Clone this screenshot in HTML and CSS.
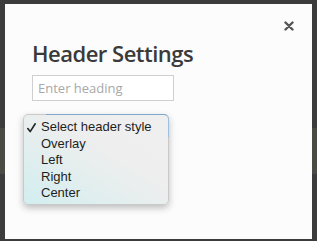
FILE: index.html
```html
<!DOCTYPE html>
<html>
<head>
    <title>Header Settings</title>
    <link rel="stylesheet" href="styles.css">
</head>
<body>
    <div class="modal">
        <button class="close" aria-label="Close">
            <svg width="10" height="10" viewBox="0 0 10 10">
                <path d="M1.5 1.5 L8.5 8.5 M8.5 1.5 L1.5 8.5" stroke="#555" stroke-width="2.4" stroke-linecap="round"/>
            </svg>
        </button>

        <h1 class="title">Header Settings</h1>

        <input class="heading-input" type="text" placeholder="Enter heading">

        <div class="style-select">
            <ul class="menu">
                <li class="selected">
                    <svg class="check" width="9" height="10" viewBox="0 0 9 10">
                        <path d="M0.8 5.6 L3.2 8.6 L8.2 0.8" fill="none" stroke="#222" stroke-width="1.6" stroke-linecap="round" stroke-linejoin="round"/>
                    </svg>
                    Select header style
                </li>
                <li>Overlay</li>
                <li>Left</li>
                <li>Right</li>
                <li>Center</li>
            </ul>
        </div>
    </div>
</body>
</html>
```

FILE: styles.css
```css
html, body {
    margin: 0;
    height: 100%;
}
body {
    background: linear-gradient(to bottom, #3c3c3c 128px, #4b4b45 128px, #4b4b45 174px, #3c3c3c 174px);
    padding: 4px 5px 2px;
    box-sizing: border-box;
    font-family: "Open Sans", sans-serif;
}
.modal {
    position: relative;
    background: #fcfcfc;
    width: 307px;
    height: 235px;
    box-sizing: border-box;
    padding: 34px 27px 0;
}
.close {
    position: absolute;
    top: 17px;
    right: 18px;
    border: 0;
    padding: 0;
    background: none;
    display: flex;
}
.title {
    margin: 0 0 7px;
    font-size: 22px;
    font-weight: 600;
    letter-spacing: -0.5px;
    line-height: 30px;
    color: #3a3a3a;
}
.heading-input {
    display: block;
    width: 142px;
    height: 26px;
    box-sizing: border-box;
    border: 1px solid #cfcfcf;
    padding: 0 5px;
    font-family: "Open Sans", sans-serif;
    font-size: 13px;
    color: #333;
    background: #fff;
}
.heading-input::placeholder {
    color: #a8a8a8;
}
.style-select {
    margin: 13px 0 0 -9px;
}
.menu {
    position: relative;
    list-style: none;
    margin: 0;
    padding: 4px 0 4px;
    width: 146px;
    height: 91px;
    box-sizing: border-box;
    border: 1px solid #c9c9c9;
    border-radius: 5px;
    background: linear-gradient(to top right, #d2eef0 0%, #e6eeee 40%, #eeeeee 60%, #efefef 100%);
    box-shadow: 0 3px 7px rgba(0, 0, 0, 0.25);
    font-family: "Liberation Sans", Arial, sans-serif;
    font-size: 13px;
    line-height: 16.6px;
    color: #1e1e1e;
}
.menu::before {
    content: "";
    position: absolute;
    top: -1px;
    right: -1px;
    width: 122px;
    height: 22px;
    border-top: 1px solid #7fa9d0;
    border-right: 1px solid #9fbfdc;
    border-top-right-radius: 5px;
    pointer-events: none;
}
.menu li {
    padding-left: 17px;
    position: relative;
}
.check {
    position: absolute;
    left: 3px;
    top: 4px;
}
```
